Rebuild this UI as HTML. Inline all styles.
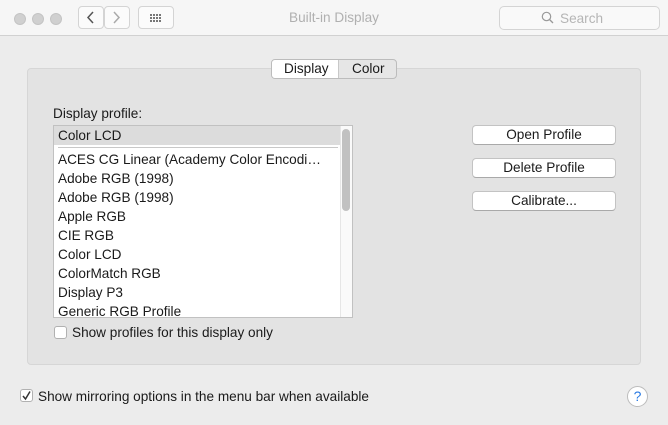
<!DOCTYPE html>
<html><head><style>
*{margin:0;padding:0;box-sizing:border-box}
body{width:668px;height:425px;background:#ececec;font-family:"Liberation Sans",sans-serif;font-size:13.6px;color:#1a1a1a;position:relative;overflow:hidden}
.a{position:absolute}
.tb{left:0;top:0;width:668px;height:36px;background:#f6f6f6;border-bottom:1px solid #d1d1d1}
.dot{width:12px;height:12px;border-radius:50%;background:#d0d0d0;border:1px solid #c4c4c4;top:13px}
.tbtn{border:1px solid #d4d4d4;border-radius:4px;background:#fbfbfb;height:23px;top:6px}
.btn{left:472px;width:144px;height:20px;background:#fff;border:1px solid #c3c3c3;border-bottom-color:#a9a9a9;border-radius:4px;text-align:center;line-height:18px}
.row{left:58px;height:19px;line-height:19px;top:0}
.cb{width:13px;height:13px;background:#fff;border:1px solid #b1b1b1;border-radius:3px}
</style></head><body>
<div class="a tb"></div>
<div class="a dot" style="left:14px"></div>
<div class="a dot" style="left:32px"></div>
<div class="a dot" style="left:50px"></div>
<div class="a tbtn" style="left:78px;width:26px"></div>
<div class="a tbtn" style="left:104px;width:26px"></div>
<svg class="a" style="left:78px;top:6px" width="52" height="23"><path d="M15 6l-5 5.5 5 5.5" stroke="#555" stroke-width="1.5" fill="none"/><path d="M36 6l5 5.5-5 5.5" stroke="#aaa" stroke-width="1.5" fill="none"/></svg>
<div class="a tbtn" style="left:138px;width:36px"></div>
<svg class="a" style="left:138px;top:6px" width="36" height="23"><g fill="#777"><rect x="12" y="8" width="2" height="2"/><rect x="15" y="8" width="2" height="2"/><rect x="18" y="8" width="2" height="2"/><rect x="21" y="8" width="2" height="2"/><rect x="12" y="11" width="2" height="2"/><rect x="15" y="11" width="2" height="2"/><rect x="18" y="11" width="2" height="2"/><rect x="21" y="11" width="2" height="2"/><rect x="12" y="14" width="2" height="2"/><rect x="15" y="14" width="2" height="2"/><rect x="18" y="14" width="2" height="2"/><rect x="21" y="14" width="2" height="2"/></g></svg>
<div class="a" style="left:0;width:668px;top:10px;text-align:center;color:#b0b0b0;font-size:13.6px">Built-in Display</div>
<div class="a" style="left:499px;top:6px;width:161px;height:24px;border:1px solid #d4d4d4;border-radius:5px;background:#f9f9f9"></div>
<svg class="a" style="left:541px;top:11px" width="14" height="14"><circle cx="5.5" cy="5.5" r="4.2" stroke="#999" stroke-width="1.2" fill="none"/><path d="M8.5 8.5l3.5 3.5" stroke="#999" stroke-width="1.3"/></svg>
<div class="a" style="left:560px;top:11px;color:#b5b5b5">Search</div>

<div class="a" style="left:27px;top:68px;width:614px;height:297px;background:#e3e3e3;border:1px solid #d6d6d6;border-radius:4px"></div>
<div class="a" style="left:271px;top:59px;width:126px;height:20px;border:1px solid #bcbcbc;border-radius:4px;background:#e6e6e6;overflow:hidden">
<div class="a" style="left:0;top:0;width:67px;height:18px;background:#fff;border-right:1px solid #c8c8c8"></div>
<div class="a" style="left:12px;top:1px">Display</div><div class="a" style="left:80px;top:1px">Color</div></div>

<div class="a" style="left:53px;top:106px">Display profile:</div>
<div class="a" style="left:53px;top:125px;width:300px;height:193px;background:#fff;border:1px solid #c1c1c1;overflow:hidden">
<div class="a" style="left:0;top:0;width:287px;height:19px;background:#dcdcdc"></div>
<div class="a" style="left:4px;top:21px;width:280px;height:1px;background:#c8c8c8"></div>
<div class="a" style="left:286px;top:0;width:13px;height:193px;background:#fafafa;border-left:1px solid #e6e6e6"></div>
<div class="a" style="left:288px;top:3px;width:8px;height:82px;background:#c1c1c1;border-radius:4px"></div>
</div>
<div class="a row" style="top:126px">Color LCD</div>
<div class="a row" style="top:150px;width:270px;white-space:nowrap;overflow:hidden;text-overflow:ellipsis">ACES CG Linear (Academy Color Encoding System)</div>
<div class="a row" style="top:169px">Adobe RGB (1998)</div>
<div class="a row" style="top:188px">Adobe RGB (1998)</div>
<div class="a row" style="top:207px">Apple RGB</div>
<div class="a row" style="top:226px">CIE RGB</div>
<div class="a row" style="top:245px">Color LCD</div>
<div class="a row" style="top:264px">ColorMatch RGB</div>
<div class="a row" style="top:283px">Display P3</div>
<div class="a" style="left:54px;top:302px;width:286px;height:15px;overflow:hidden"><div style="padding-left:4px;line-height:19px">Generic RGB Profile</div></div>

<div class="a btn" style="top:125px">Open Profile</div>
<div class="a btn" style="top:158px">Delete Profile</div>
<div class="a btn" style="top:191px">Calibrate...</div>

<div class="a cb" style="left:54px;top:326px"></div>
<div class="a" style="left:72px;top:325px">Show profiles for this display only</div>
<div class="a cb" style="left:20px;top:389px"></div>
<svg class="a" style="left:20px;top:389px" width="13" height="13"><path d="M3 7l2.5 3L10 2.5" stroke="#333" stroke-width="1.5" fill="none"/></svg>
<div class="a" style="left:38px;top:389px">Show mirroring options in the menu bar when available</div>
<div class="a" style="left:627px;top:386px;width:21px;height:21px;border-radius:50%;background:#fff;border:1px solid #bcbcbc;color:#2a7ae2;text-align:center;line-height:19px;font-size:14px">?</div>
</body></html>
